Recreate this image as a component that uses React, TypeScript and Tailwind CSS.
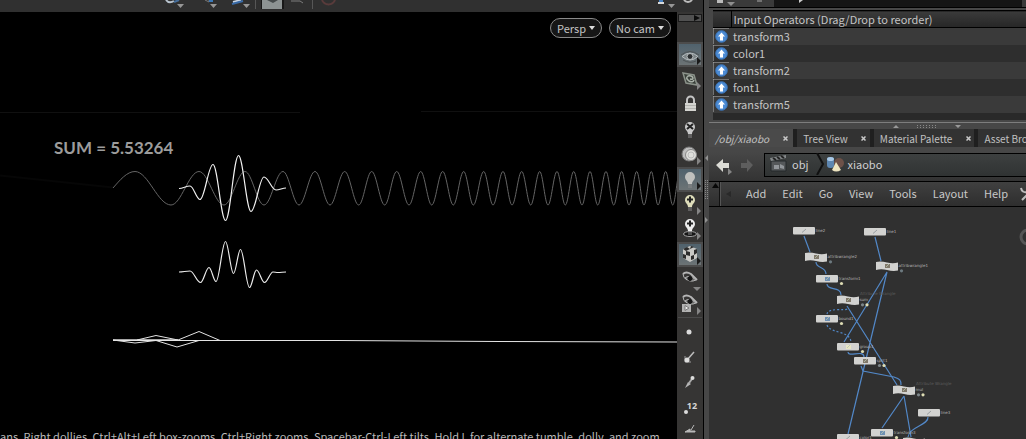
import React from 'react';

type Point = [number, number];

const operators = ['transform3', 'color1', 'transform2', 'font1', 'transform5'];
const menus = ['Add', 'Edit', 'Go', 'View', 'Tools', 'Layout', 'Help'];

// x of every crest and trough of the chirp, crest first
const chirpX = [
  135, 171, 199, 224, 245, 264, 283, 299, 315, 330, 344.7, 358.7, 371.7, 384.7, 396.7, 409, 420.7, 431.7,
  442.7, 453.3, 463.7, 473.3, 483.7, 493, 503, 512, 521.7, 530.7, 539.7, 548, 557, 565.3, 573.7, 582, 590,
  597.7, 606, 613.7, 621.7, 629, 636.7, 644, 651.3, 658, 665.7, 672.7, 680,
];
const chirp: Point[] = chirpX.map((x, i) => [x, i % 2 === 0 ? 171.5 : 205]);

const wavelet: Point[] = [
  [179, 188.5], [190, 186], [200, 199.5], [213, 164.5], [225.5, 220.5], [238.5, 155.5], [251, 211.5],
  [264, 177], [276, 190], [286, 188],
];
const product: Point[] = [
  [179, 272], [190, 271], [200.5, 282.5], [209, 267.5], [216, 281.5], [225.5, 241.5], [233.5, 273.5],
  [240.5, 249.5], [249.5, 287.5], [256.5, 270], [264.5, 282.5], [273, 272], [278, 272.5], [286, 272],
];

// joins extrema with half-sine shaped curves
const wave = (points: Point[], start = `M${points[0][0]} ${points[0][1]}`) =>
  points.slice(1).reduce((d, [x, y], i) => {
    const [px, py] = points[i];
    const h = (x - px) * 0.364;
    return `${d}C${px + h} ${py} ${x - h} ${y} ${x} ${y}`;
  }, start);

const Corner = ({ down = false }: { down?: boolean }) => (
  <path d={down ? 'M16 20h8l-4 4z' : 'M20 15v8l4-4z'} fill="#858585" />
);

const Eye = ({ y = 0 }: { y?: number }) => (
  <g transform={`translate(0 ${y})`} fill="none" stroke="#b5b5b5">
    <path d="M6 8q3-3 8 0l6 6" strokeWidth="2" />
    <path d="M8 12q4-4 11 2q-6 3-11-2z" fill="#6a6a6a" />
    <circle cx="13" cy="12.500" r="2" fill="#151515" stroke="#111" />
    <path d="M6 8q0 4 4 6" strokeWidth="1" />
  </g>
);

const Bulb = ({ mark, fill = '#c9c9c9', y = 0 }: { mark?: 'x' | 'plus'; fill?: string; y?: number }) => (
  <g transform={`translate(0 ${y})`}>
    <path d="M8 9a5 5 0 1 1 10 0c0 3-3 4-3 7h-4c0-3-3-4-3-7z" fill={fill} />
    <path d="M11 17h4M11 19h4" stroke="#8a8a8a" />
    {mark === 'x' && <path d="M10 6l6 5m0-5l-6 5" stroke="#222" strokeWidth="2" />}
    {mark === 'plus' && <path d="M13 5.500v6M10 8.500h6" stroke="#222" strokeWidth="2" />}
  </g>
);

const displayTools: { label: string; active?: boolean; icon: React.ReactNode }[] = [
  {
    label: 'Display objects',
    active: true,
    icon: (
      <>
        <path d="M5 14.500q8-7 16 0q-8 7-16 0z" fill="#7c8486" stroke="#b4babc" />
        <path d="M4 13q9-7 18 0M6 18q7 4 13 1" fill="none" stroke="#4d5355" />
        <circle cx="13" cy="14.500" r="3" fill="#2b2f31" stroke="#b9bfc1" />
        <path d="M20 15v8l4-4z" fill="#191919" />
      </>
    ),
  },
  {
    label: 'Template geometry',
    icon: (
      <>
        <path d="M6 6l11 2l3 10l-11-2z" fill="#3a403a" stroke="#8b928a" strokeWidth="1.500" />
        <path d="M17 13q-1 3-5 1q-4-3-1-5q4-1 5 2q0 2-3 1" fill="none" stroke="#a9b1a8" strokeWidth="1.500" />
        <Corner />
      </>
    ),
  },
  {
    label: 'Lock camera',
    icon: (
      <>
        <path d="M10 12V8a3.500 3.500 0 0 1 7 0v4" fill="none" stroke="#c4c4c4" strokeWidth="2" />
        <path d="M8 11h11v8H8z" fill="#d4d4d0" />
        <path d="M8 13.500h11M8 16.500h11" stroke="#b4b4b0" />
      </>
    ),
  },
  { label: 'No lighting', icon: <Bulb mark="x" y={1} /> },
  {
    label: 'Headlight',
    icon: (
      <>
        <circle cx="12" cy="12" r="7" fill="#bdbdbd" stroke="#777" />
        <circle cx="14" cy="13" r="5.500" fill="#dededb" stroke="#888" />
        <circle cx="14" cy="13" r="3" fill="none" stroke="#bbb" />
        <Corner />
      </>
    ),
  },
  {
    label: 'Normal lighting',
    active: true,
    icon: (
      <>
        <Bulb y={1} fill="#bfc0be" />
        <path d="M20 15v8l4-4z" fill="#191919" />
      </>
    ),
  },
  { label: 'High quality lighting', icon: <><Bulb mark="plus" fill="#deddba" y={-1} /><Corner /></> },
  {
    label: 'Shadows',
    icon: (
      <>
        <ellipse cx="13" cy="17" rx="6.500" ry="2.500" fill="#161616" stroke="#a6a6a6" />
        <Bulb mark="plus" fill="#ededed" y={-2} />
        <Corner />
      </>
    ),
  },
  {
    label: 'Materials',
    active: true,
    icon: (
      <>
        <path d="M6 7l7-3l7 3v9l-7 4l-7-4z" fill="#c9c9c6" />
        <path d="M6 7l4-2l3 2l-4 2zM14 4l3 1l-4 2zM6 12l3 1v4l-3-1zM9 9l4 1v4l-4-1zM14 14l3-1v4l-3 1zM17 8l3-1v4l-3 2z" fill="#2c2c2c" />
        <path d="M20 15v8l4-4z" fill="#191919" />
      </>
    ),
  },
  { label: 'Visibility', icon: <><Eye y={-1} /><Corner down /></> },
  {
    label: 'Render visibility',
    icon: (
      <>
        <Eye y={-3} />
        <path d="M5 12h9v8H5z" fill="#b2b2b2" />
        <path d="M8 13.500v5l4-2.500z" fill="#eee" stroke="#777" />
        <Corner />
      </>
    ),
  },
];

const markerTools: { label: string; icon: React.ReactNode }[] = [
  { label: 'Points', icon: <circle cx="12" cy="12" r="2.500" fill="#dcdcdc" /> },
  {
    label: 'Point normals',
    icon: (
      <>
        <path d="M10 15l7-8" stroke="#bdbdbd" strokeWidth="1.500" />
        <path d="M8 11v6h6" fill="none" stroke="#9a9a9a" />
        <circle cx="10" cy="15" r="2.500" fill="#dcdcdc" />
      </>
    ),
  },
  {
    label: 'Point trails',
    icon: (
      <>
        <path d="M8 18l3-6l3 2z" fill="#b5b5b5" />
        <path d="M12 13l3-4" stroke="#aaa" strokeWidth="2" />
        <circle cx="15.500" cy="8" r="2" fill="#dcdcdc" />
      </>
    ),
  },
];

const UpArrow = () => (
  <svg viewBox="0 0 16 16" className="block size-4">
    <path d="M0 16V0h16" fill="none" stroke="#b5b5b5" />
    <circle cx="8.500" cy="8.500" r="5.800" fill="#4c8bd4" stroke="#3a74b8" />
    <path d="M8.500 4.500l3.500 4h-2v4h-3v-4h-2z" fill="#fff" />
  </svg>
);

const Shelf = () => (
  <div className="h-3 shrink-0 overflow-hidden bg-[#303030]">
    <div className="flex h-3 justify-between">
      <svg width="345" height="12" className="shrink-0">
        <g fill="none" strokeWidth="2">
          <path d="M166 0q3 4 8 1" stroke="#b9c4cf" />
          <path d="M174 2l5-2" stroke="#466f9d" />
          <path d="M205 0l4 2v-2" stroke="#777" strokeWidth="1" />
          <path d="M209 1h4" stroke="#3b79b8" strokeWidth="2" />
          <path d="M233 2l8-2" stroke="#c9d6e6" />
          <path d="M232 4l11-3" stroke="#396ba8" />
        </g>
        <path d="M177 4h7l-3.500 4zM210 4h7l-3.500 4zM243 4h7l-3.500 4z" fill="#969696" />
        <path d="M255.500 0v9M312.500 0v9" stroke="#575757" />
        <path d="M261 0h23v9h-23z" fill="#181818" />
        <path d="M262 0h20v9h-20z" fill="#8d9393" />
        <path d="M267 0l6 3l5-3z" fill="#454a4b" />
        <path d="M291 1h9l3 2" fill="none" stroke="#7c7c7c" />
        <path d="M322 0a7 7 0 0 0 13 0" fill="none" stroke="#593b3b" strokeWidth="2" />
      </svg>
      <svg width="50" height="12" className="shrink-0">
        <path d="M15 4h7l-3.500 4z" fill="#969696" />
        <path d="M5 3h6" stroke="#d9d9d9" strokeWidth="2" />
        <path d="M6 1h4" stroke="#457fc0" strokeWidth="2" />
        <path d="M31 0a5 5 0 0 0 8 0" fill="none" stroke="#bbb" strokeWidth="2" />
      </svg>
    </div>
  </div>
);

const CameraButton = ({ children }: { children: string }) => (
  <button className="flex h-5 items-center gap-[3px] rounded-full border border-[#8a8a8a] bg-[#161616] px-1.5 pb-px text-[11px] leading-4 text-[#c4c4c4]">
    {children}
    <svg width="6" height="4"><path d="M0 0h6l-3 4z" fill="#ddd" /></svg>
  </button>
);

const Viewport = () => (
  <div className="relative min-w-0 flex-1 overflow-hidden bg-black">
    <svg viewBox="0 12 1400 427" width="1400" height="427" className="absolute top-0 left-0 max-w-none" fill="none">
      <path d="M0 112.500h300M421 111.500h979" stroke="#101010" />
      <path d="M0 175.500L113 187.500" stroke="#060606" strokeWidth="2" />
      <path d={wave(chirp, 'M113 188C120 180 127 171.500 135 171.500')} stroke="#656565" />
      <path d={wave(wavelet)} stroke="#f2f2f2" strokeWidth="1.200" />
      <path d={wave(product)} stroke="#ececec" strokeWidth="1.200" />
      <g stroke="#e4e4e4">
        <path d="M113 339.500H178" stroke="#a5a5a5" />
        <path d="M113 340.500H338L499 341.500L677 342" />
        <path d="M137 340L156 335.500L178 340L199 331.500L220 340.500" />
        <path d="M113 340L135 343L156 340.500L177 347L199 340.500" />
      </g>
    </svg>
    <div className="absolute top-1.5 right-1.5 flex gap-[7px]">
      <CameraButton>Persp</CameraButton>
      <CameraButton>No cam</CameraButton>
    </div>
    <p className="absolute top-[126px] left-[54px] font-['Lato',sans-serif] text-[17px] leading-5 font-bold text-[#9c9c9c]">
      SUM = 5.53264
    </p>
    <p className="absolute top-[416px] left-0 text-[11px] leading-4 whitespace-nowrap text-[#b9b9b9]">
      ans. Right dollies. Ctrl+Alt+Left box-zooms. Ctrl+Right zooms. Spacebar-Ctrl-Left tilts. Hold L for alternate tumble, dolly, and zoom.
    </p>
  </div>
);

const DisplayBar = () => (
  <div className="flex w-[26px] shrink-0 flex-col overflow-hidden bg-[#363534]">
    <div className="mx-px mt-0.5 mb-5 flex h-2 shrink-0 items-center justify-end border border-[#191919] bg-[#505050]">
      <svg width="7" height="6"><path d="M0 0v6l6-3z" fill="#0c0c0c" /></svg>
    </div>
    {displayTools.map((tool) => (
      <button
        key={tool.label}
        aria-label={tool.label}
        className={`h-[25px] shrink-0 ${tool.active ? 'border-2 border-[#4c4c4c] bg-linear-to-b from-[#50626d] to-[#6c7375]' : ''}`}
      >
        <svg viewBox={tool.active ? '2 2 22 21' : '0 0 26 25'} className="block size-full">{tool.icon}</svg>
      </button>
    ))}
    <hr className="mx-px mb-0.5 shrink-0 border-[#4b4b4b]" />
    {markerTools.map((tool) => (
      <button key={tool.label} aria-label={tool.label} className="h-[25px] shrink-0">
        <svg viewBox="0 0 26 25" className="block h-[25px] w-[26px]">{tool.icon}</svg>
      </button>
    ))}
    <button className="relative h-[25px] shrink-0 pb-1 pl-1 font-['Open_Sans',sans-serif] text-[9px] leading-4 font-bold text-[#d6d6d6]">
      12
      <span className="absolute bottom-1.5 left-[7px] size-1 rounded-full bg-[#dcdcdc]" />
    </button>
    <button aria-label="Primitive normals" className="h-[25px] shrink-0">
      <svg viewBox="0 0 26 25" className="block h-[25px] w-[26px]">
        <path d="M8 12l5-3v2h5v1zM14 10l3-5" fill="#b8b8b8" stroke="#b8b8b8" />
      </svg>
    </button>
  </div>
);

const OperatorTable = () => (
  <table className="w-full table-fixed border-collapse text-left text-[11px] leading-4 text-[#c4c4c4]">
    <colgroup>
      <col className="w-[18px]" />
      <col />
    </colgroup>
    <thead>
      <tr className="h-[17px] border-y border-black bg-linear-to-b from-[#3a3a3a] to-[#272727]">
        <th aria-label="Type" className="border-r border-black p-0" />
        <th className="p-0 pl-0.5 font-normal">Input Operators (Drag/Drop to reorder)</th>
      </tr>
    </thead>
    <tbody>
      {operators.map((name) => (
        <tr key={name} className="h-[17px] odd:bg-[#3a3a3a] even:bg-[#2e2e2e]">
          <td className="p-0"><UpArrow /></td>
          <td className="p-0 pl-0.5">{name}</td>
        </tr>
      ))}
    </tbody>
  </table>
);

const Tab = ({ children, active = false }: { children: string; active?: boolean }) => (
  <div
    className={`flex h-full shrink-0 items-center gap-3 pt-px pl-1.5 ${active ? 'bg-[#4a4a4a] pr-1 italic' : 'border-l-4 border-[#1f1f1f] bg-[#323232] pr-0.5'}`}
  >
    <button role="tab" aria-selected={active} className="whitespace-nowrap">{children}</button>
    <button aria-label={`Close ${children}`} className="grid size-2 place-items-center">
      <svg width="5" height="5"><path d="M.5.5l4 4m0-4l-4 4" stroke="#c8c8c8" strokeWidth="1.500" /></svg>
    </button>
  </div>
);

const PathBar = () => (
  <div className="flex h-[29px] shrink-0 items-start bg-linear-to-b from-[#474747] to-[#333] pt-px">
    <svg width="55" height="24" className="shrink-0">
      <path d="M7 12l7-6v4h6v5h-6v4z" fill="#dcdcd6" />
      <path d="M19 15v7l4-3z" fill="#858585" />
      <path d="M44 12l-6-6v4h-6v5h6v4z" fill="#5e5e5e" />
    </svg>
    <nav className="flex h-6 flex-1 items-center border border-r-0 border-black bg-linear-to-b from-[#3d4040] to-[#303333] pb-0.5 text-[11px] leading-4 text-[#d0d0d0]">
      <svg width="26" height="22" className="shrink-0">
        <path d="M6 8h15v10H6z" fill="#55585a" stroke="#25282a" />
        <path d="M5 5l16-3v3L6 8z" fill="#85898b" />
        <path d="M8 5l3 2M12 4l3 2M16 3l3 2" stroke="#222" strokeWidth="2" />
        <path d="M9 12h5v4H9zM15 11l4 2v3l-4-1z" fill="#92969a" />
      </svg>
      <a href="#obj" className="pl-px">obj</a>
      <svg width="37" height="22" className="shrink-0">
        <path d="M8 0l6 11l-6 11" fill="none" stroke="#101010" strokeWidth="2" />
        <rect x="18" y="4" width="7" height="11" rx="3" fill="#5d86b0" />
        <ellipse cx="21.500" cy="6" rx="3.500" ry="2" fill="#a8c8e6" />
        <circle cx="30" cy="10" r="5" fill="#6d5148" />
        <path d="M27 9l5 8q-5 3-9 0z" fill="#eee5c0" />
      </svg>
      <a href="#xiaobo" className="pl-0.5">xiaobo</a>
    </nav>
  </div>
);

type NodeSpec = { x: number; y: number; name: string; wavy?: boolean; dots?: string[]; note?: string; tint?: string };

const nodes: NodeSpec[] = [
  { x: 793, y: 227, name: 'line2' },
  { x: 864, y: 228, name: 'line1' },
  { x: 805, y: 253, name: 'attribwrangle2', wavy: true, dots: ['#6d7a80'], tint: '#6b6250' },
  { x: 876, y: 262, name: 'attribwrangle1', wavy: true, dots: ['#6d7a80'], tint: '#6b6250' },
  { x: 816, y: 275, name: 'transform1', dots: ['#deddb4'], tint: '#5580ad' },
  { x: 837, y: 296, name: 'sum', wavy: true, dots: ['#7d868a', '#deddb4'], note: 'Attribute Wrangle', tint: '#6b6250' },
  { x: 816, y: 315, name: 'bound1', dots: ['#deddb4'], tint: '#5580ad' },
  { x: 837, y: 343, name: 'group1', dots: ['#deddb4'], tint: '#eeebc0' },
  { x: 854, y: 357, name: 'split1', dots: ['#7d868a', '#deddb4'], tint: '#6b6250' },
  { x: 893, y: 386, name: 'mul', wavy: true, dots: ['#7d868a', '#deddb4'], note: 'Attribute Wrangle', tint: '#6b6250' },
  { x: 918, y: 409, name: 'line3' },
  { x: 871, y: 429, name: 'transform3', dots: ['#deddb4'], tint: '#5580ad' },
  { x: 837, y: 434, name: 'color1' },
  { x: 903, y: 438, name: '', wavy: true },
];

const Network = () => (
  <div className="min-h-0 flex-1 overflow-hidden bg-[#303030]">
    <svg viewBox="709 207 317 232" width="317" height="232" className="block max-w-none">
      <g fill="none" stroke="#5288c8" strokeWidth="1.200">
        <path d="M804 236L810 252M875 237L881 261" />
        <path d="M816 262C816 269 826 266 826 274M827 284C827 291 841 286 841 295" />
        <path d="M847 309C845 311 829 307 827 314M827 325C830 334 850 330 851 342" strokeDasharray="2 2" />
        <path d="M887 272L844 342M887 272L848 434M847 306L897 385" />
        <path d="M848 352C848 358 864 349 864 357" />
        <path d="M861 366L863 371L894 377C900 379 901 380 901 385" />
        <path d="M904 396L882 428M904 396L911 437M928 417C929 425 909 427 908 437" />
      </g>
      {nodes.map((n) => (
        <g key={n.name + n.x} transform={`translate(${n.x} ${n.y})`}>
          {n.wavy ? (
            <path d="M0 0q5-1 11 0.500t11 0v8q-5 1-11-0.500t-11 0z" fill="#d2d2d0" />
          ) : (
            <rect width="22" height="7.500" rx="1" fill="#d2d2d0" />
          )}
          {n.tint ? (
            <>
              <rect x="9" y="2" width="5" height="4" fill={n.tint} opacity="0.8" />
              <path d="M10 5l3-3" stroke="#b8c4b0" strokeWidth="0.800" />
            </>
          ) : (
            <path d="M9 5.500l4-3.500" stroke="#9a9fa2" />
          )}
          {n.dots?.map((fill, i) => (
            <circle key={fill} cx={25.5 + i * 4.5} cy={n.wavy ? 8.8 : 8.5} r="1.600" fill={fill} />
          ))}
          <text x="22.500" y="5" fontSize="4" fontFamily="DejaVu Sans, sans-serif" fill="#b4b4b4">{n.name}</text>
          {n.note && (
            <text x="23" y="-1" fontSize="4" fontFamily="DejaVu Sans, sans-serif" fill="#5c5c5c">{n.note}</text>
          )}
        </g>
      ))}
      <circle cx="1028" cy="237" r="7" fill="none" stroke="#555" strokeWidth="3" />
    </svg>
  </div>
);

const App = () => {
  return (
    <main className="flex h-screen overflow-hidden bg-[#303030] font-['Noto_Sans_CJK_SC',sans-serif]">
      <section className="flex min-w-0 flex-1 flex-col">
        <Shelf />
        <div className="flex min-h-0 flex-1">
          <Viewport />
          <DisplayBar />
        </div>
      </section>
      <div className="relative w-1.5 shrink-0 border-l border-black bg-[#474747]">
        <svg width="5" height="70" className="absolute top-[154px] left-0">
          <path d="M4 1v6l-3-3zM1 63v6l3-3z" fill="#909090" />
          <path d="M1.500 26v20M3.500 26v20" stroke="#888" strokeDasharray="1 1" />
        </svg>
      </div>
      <section className="flex w-[317px] shrink-0 flex-col bg-[#474747]">
        <div className="flex h-2 shrink-0 border-b border-black bg-[#3a3a3a]">
          <svg width="65" height="7" className="shrink-0">
            <path d="M8 0h6v3H8z" fill="#bbb" />
            <path d="M18 2h8l-4 4z" fill="#8e8e8e" />
            <path d="M48 1h5" stroke="#aaa" />
          </svg>
          <div className="mr-1 flex-1 bg-[#151515]">
            <svg width="30" height="7"><path d="M25 0h4l-4 3z" fill="#ccc" /></svg>
          </div>
        </div>
        <div className="mt-0.5 ml-1 h-[110px] shrink-0 overflow-hidden bg-[#292929]">
          <OperatorTable />
        </div>
        <div className="mt-0.5 flex h-[7px] shrink-0 items-center justify-center border-t border-[#7d7d7d] pl-[120px]">
          <svg width="70" height="5">
            <path d="M0 4h6l-3-3zM62 1h6l-3 3z" fill="#999" />
            <path d="M24 1.500h21M24 3.500h21" stroke="#888" strokeDasharray="1 2" />
          </svg>
        </div>
        <div role="tablist" className="flex h-[18px] shrink-0 overflow-hidden bg-[#323232] text-[10px] leading-4 text-[#c0c0c0]">
          <Tab active>/obj/xiaobo</Tab>
          <Tab>Tree View</Tab>
          <Tab>Material Palette</Tab>
          <Tab>Asset Browser</Tab>
        </div>
        <div className="h-[5px] shrink-0 bg-[#474747]" />
        <PathBar />
        <div className="flex h-[26px] shrink-0 items-center overflow-hidden border-y border-black bg-linear-to-b from-[#404040] to-[#2e2e2e] text-[11px] leading-5 text-[#c8c8c8]">
          <svg width="37" height="24" className="shrink-0">
            <path d="M3 6h7l-3.500-5z" fill="#080808" />
            <path d="M10.500 0v24" stroke="#111" />
            <path d="M11.500 0v24" stroke="#555" />
            <path d="M22 9v6l-5-3z" fill="#292929" />
          </svg>
          <div className="flex shrink-0 gap-4 pb-0.5">
            {menus.map((label) => (
              <button key={label}>{label}</button>
            ))}
          </div>
          <svg width="20" height="20" className="ml-3 shrink-0">
            <path d="M1 4q1 5 6 4l8 8M2 16l9-9" fill="none" stroke="#bcbcbc" strokeWidth="2" />
          </svg>
        </div>
        <Network />
      </section>
    </main>
  );
};

export default App;
